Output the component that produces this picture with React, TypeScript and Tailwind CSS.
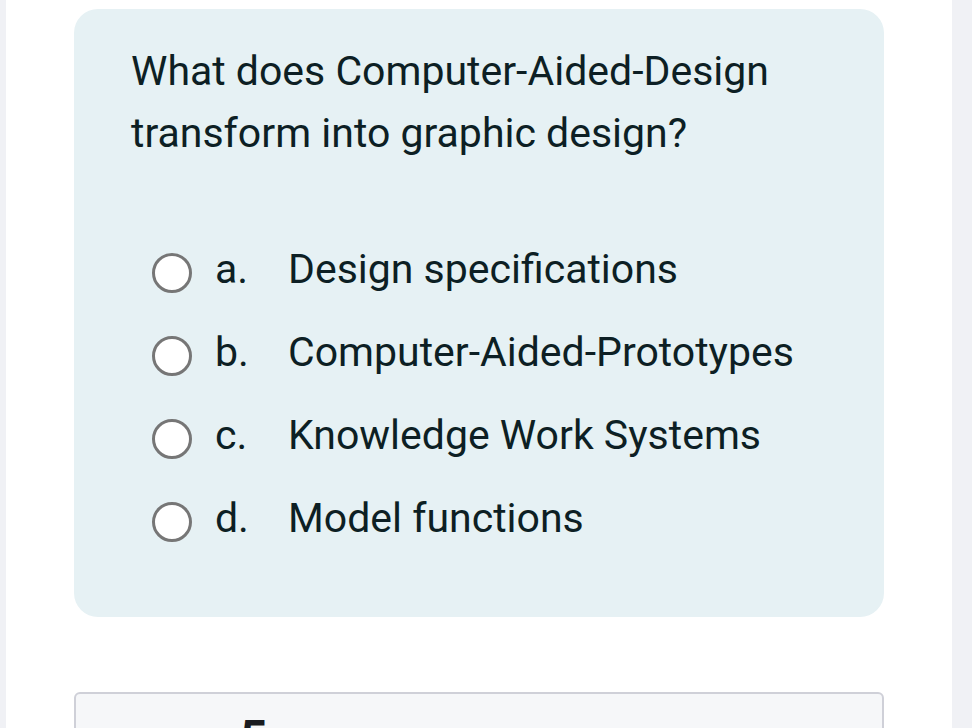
import React from "react";

const options = [
  { key: "a.", text: "Design specifications" },
  { key: "b.", text: "Computer-Aided-Prototypes" },
  { key: "c.", text: "Knowledge Work Systems" },
  { key: "d.", text: "Model functions" },
];

export default function App() {
  return (
    <div
      className="flex w-[972px] h-[728px] overflow-hidden bg-[#f0f1f5]"
      style={{ fontFamily: "Roboto, 'Noto Sans', sans-serif" }}
    >
      <div className="w-[6px] shrink-0" />
      <div className="flex-1 bg-white px-[68px] pt-[9px]">
        {/* Question card */}
        <div className="rounded-[24px] bg-[#e6f1f4] pt-[31px] pb-[54px]">
          <h2 className="pl-[57px] pr-[40px] text-[41px] leading-[62px] text-[#0d1f24]">
            What does Computer-Aided-Design
            <br />
            transform into graphic design?
          </h2>
          <div className="mt-[67px] flex flex-col">
            {options.map((o) => (
              <label key={o.key} className="flex h-[83px] items-center pl-[78px] text-[41px] text-[#0d1f24]">
                <span className="h-[40px] w-[40px] shrink-0 rounded-full border-[3px] border-[#767676] bg-white" />
                <span className="ml-[23px] w-[73px] shrink-0 pb-[6px]">{o.key}</span>
                <span className="pb-[6px]">{o.text}</span>
              </label>
            ))}
          </div>
        </div>

        {/* Next card, cut off at the bottom of the window */}
        <div className="mt-[75px] h-[120px] overflow-hidden rounded-[6px] border-2 border-[#cfd0d8] bg-[#f6f7f9] pl-[164px] pt-[20px]">
          <span className="text-[48px] font-bold leading-none text-[#1a1c20]">5</span>
        </div>
      </div>
      <div className="w-[20px] shrink-0" />
    </div>
  );
}
